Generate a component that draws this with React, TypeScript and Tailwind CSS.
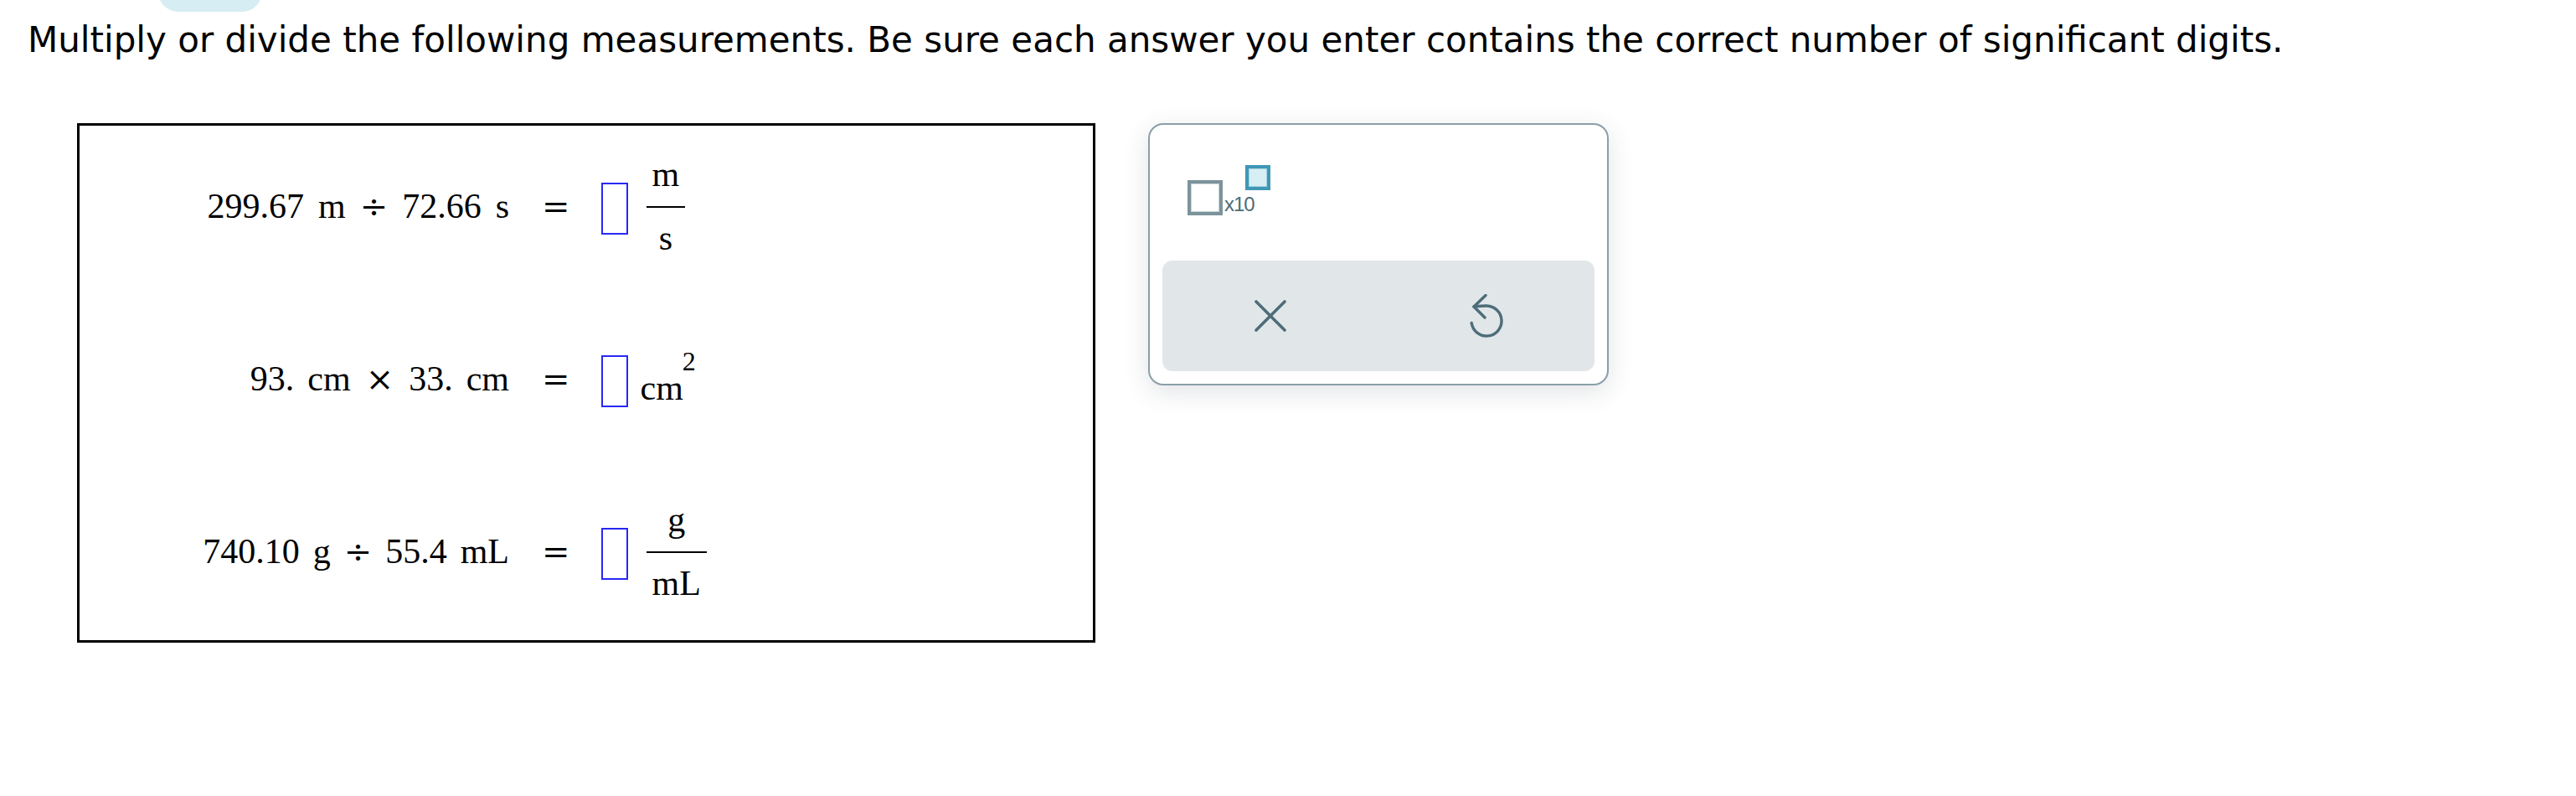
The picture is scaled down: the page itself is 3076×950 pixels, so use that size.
import React from "react";

function AnswerBox() {
  return <div className="ml-[37px] mt-[6px] h-[62px] w-[32px] shrink-0 border-2 border-[#2828f5] bg-white" />;
}

function Op({ children, className }: { children: React.ReactNode; className?: string }) {
  return (
    <span className={"font-['DejaVu_Serif',serif] text-[40px] leading-[41px] " + (className ?? "")}>{children}</span>
  );
}

function Fraction({ num, den }: { num: string; den: string }) {
  return (
    <div className="ml-[22px] flex flex-col items-stretch">
      <div className="mb-[17px] px-[7px] text-center">{num}</div>
      <div className="h-[2px] bg-black" />
      <div className="mt-[16px] px-[7px] text-center">{den}</div>
    </div>
  );
}

function Row({ children, unit }: { children: React.ReactNode; unit: React.ReactNode }) {
  return (
    <div className="flex h-[128px] items-center font-['Liberation_Serif','Times_New_Roman',serif] text-[42px] leading-[41px] text-black">
      <div className="flex w-[513px] justify-end whitespace-nowrap">{children}</div>
      <Op className="ml-[39px]">=</Op>
      <AnswerBox />
      {unit}
    </div>
  );
}

function XIcon() {
  return (
    <svg width="38" height="38" viewBox="0 0 38 38" fill="none" stroke="#4e6d79" strokeWidth="3.6" strokeLinecap="round">
      <line x1="2" y1="2" x2="36" y2="36" />
      <line x1="36" y1="2" x2="2" y2="36" />
    </svg>
  );
}

function UndoIcon() {
  return (
    <svg width="40" height="52" viewBox="0 0 40 52" fill="none" stroke="#4e6d79" strokeWidth="3.4" strokeLinecap="round" strokeLinejoin="round">
      <path d="M19 1.5 L5 15 L18 28" />
      <path d="M5 15 C10 14.5 15 14 20 14 A18 18 0 1 1 2.2 34.5" />
    </svg>
  );
}

export default function App() {
  return (
    <div className="min-h-[950px] w-[3076px] bg-white text-black">
      <div className="ml-[189px] h-[14px] w-[124px] overflow-hidden">
        <div className="-mt-[34px] h-[48px] rounded-[24px] bg-[#d6edf3]" />
      </div>
      <p className="ml-[33px] mt-[10px] whitespace-nowrap font-['DejaVu_Sans',Verdana,sans-serif] text-[42px] leading-[48px] text-black">
        Multiply or divide the following measurements. Be sure each answer you enter contains the correct number of significant digits.
      </p>

      <div className="ml-[92px] mt-[75px] flex items-start">
        <div className="flex h-[620px] w-[1216px] shrink-0 flex-col gap-[78px] border-[3px] border-black pt-[32px]">
          <Row unit={<Fraction num="m" den="s" />}>
            <div className="flex items-center gap-[17px]">
              <span>299.67</span>
              <span>m</span>
              <Op>÷</Op>
              <span>72.66</span>
              <span>s</span>
            </div>
          </Row>
          <Row
            unit={
              <div className="ml-[15px] flex items-center">
                <span className="relative top-[11px]">cm</span>
                <span className="relative -top-[21px] -ml-[1px] text-[32px] leading-[32px]">2</span>
              </div>
            }
          >
            <div className="flex items-center">
              <span>93.</span>
              <span className="ml-[16px]">cm</span>
              <Op className="ml-[18px]">×</Op>
              <span className="ml-[18px]">33.</span>
              <span className="ml-[16px]">cm</span>
            </div>
          </Row>
          <Row unit={<Fraction num="g" den="mL" />}>
            <div className="flex items-center gap-[16px]">
              <span>740.10</span>
              <span>g</span>
              <Op>÷</Op>
              <span>55.4</span>
              <span>mL</span>
            </div>
          </Row>
        </div>

        <div className="ml-[63px] flex h-[313px] w-[550px] shrink-0 flex-col rounded-[18px] border-2 border-[#8a9fa8] bg-white shadow-[0_8px_30px_rgba(40,60,70,0.14)]">
          <div className="flex h-[162px] items-start pl-[45px] pt-[48px]">
            <div className="mt-[18px] h-[42px] w-[42px] border-4 border-[#7d939c] bg-white shadow-[inset_0_0_0_1px_#c9d4d8]" />
            <span className="ml-[2px] mt-[35px] font-['Liberation_Sans',Arial,sans-serif] text-[24px] leading-[24px] tracking-[-1px] text-[#4d6b78]">
              x10
            </span>
            <div className="-ml-[11px] h-[30px] w-[30px] border-4 border-[#3f98b5] bg-[#d6eef4] shadow-[inset_0_0_0_1px_#a9d3e0]" />
          </div>
          <div className="mx-[15px] flex h-[132px] rounded-[12px] bg-[#e1e6e9]">
            <button className="flex flex-1 items-center justify-center">
              <XIcon />
            </button>
            <button className="flex flex-1 items-center justify-center">
              <UndoIcon />
            </button>
          </div>
        </div>
      </div>
    </div>
  );
}
